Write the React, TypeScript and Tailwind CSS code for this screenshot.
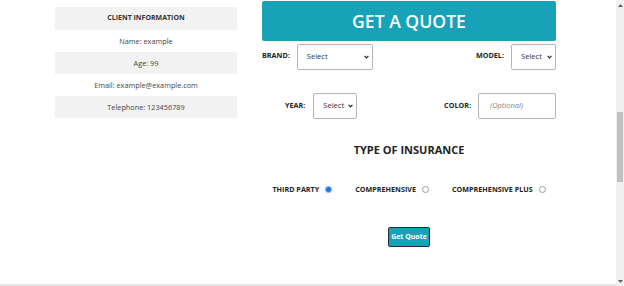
import React from "react";

function Chevron() {
  return (
    <svg width="5" height="4" viewBox="0 0 5 4" className="shrink-0">
      <path d="M0.6 0.8 L2.5 2.8 L4.4 0.8" fill="none" stroke="#222" strokeWidth="1.2" />
    </svg>
  );
}

function FakeSelect({ w, textPl }: { w: string; textPl: string }) {
  return (
    <div
      className={`flex h-[26px] ${w} items-center justify-between rounded-[2px] border border-[#b5b5b5] bg-white ${textPl} pr-[3px] text-[7.6px] text-[#333]`}
    >
      <span>Select</span>
      <Chevron />
    </div>
  );
}

function Radio({ checked }: { checked?: boolean }) {
  return checked ? (
    <span className="inline-block h-[7px] w-[7px] shrink-0 rounded-full border border-[#7fb0f5] bg-[#1f78f0]" />
  ) : (
    <span className="inline-block h-[7px] w-[7px] shrink-0 rounded-full border border-[#9a9a9a] bg-white" />
  );
}

export default function App() {
  const rows = [
    { t: "Name: example", grey: false },
    { t: "Age: 99", grey: true },
    { t: "Email: example@example.com", grey: false },
    { t: "Telephone: 123456789", grey: true },
  ];
  return (
    <div className="flex h-[286px] w-[624px] overflow-hidden bg-white font-['Open_Sans',sans-serif]">
      <div className="flex flex-1 flex-col">
        <div className="flex flex-1 pl-[55px] pt-[1px]">
          {/* Left column */}
          <div className="mt-[6px] w-[182px]">
            <div className="flex h-[23px] items-center justify-center bg-[#f2f2f2] text-[7px] font-bold text-[#333]">
              CLIENT INFORMATION
            </div>
            {rows.map((r) => (
              <div
                key={r.t}
                className={`flex h-[22px] items-center justify-center text-[7.3px] text-[#444] ${r.grey ? "bg-[#f2f2f2]" : "bg-white"}`}
              >
                {r.t}
              </div>
            ))}
          </div>

          {/* Right column */}
          <div className="ml-[25px] flex w-[294px] flex-col">
            <div className="flex h-[40px] items-center justify-center rounded-[2px] bg-[#17a2b8] text-[17.6px] font-semibold text-white">
              GET A QUOTE
            </div>

            <div className="mt-[3px] flex items-start justify-between">
              <div className="flex items-start gap-[7px]">
                <span className="mt-[6px] text-[7.2px] font-bold text-[#222]">BRAND:</span>
                <FakeSelect w="w-[76px]" textPl="pl-[9px]" />
              </div>
              <div className="flex items-start gap-[7px]">
                <span className="mt-[6px] text-[7.2px] font-bold text-[#222]">MODEL:</span>
                <FakeSelect w="w-[45px]" textPl="pl-[9px]" />
              </div>
            </div>

            <div className="mt-[23px] flex items-start justify-between pl-[23px]">
              <div className="flex items-start gap-[8px]">
                <span className="mt-[7px] text-[7.2px] font-bold text-[#222]">YEAR:</span>
                <FakeSelect w="w-[44px]" textPl="pl-[9px]" />
              </div>
              <div className="flex items-start gap-[7px]">
                <span className="mt-[7px] text-[7.2px] font-bold text-[#222]">COLOR:</span>
                <div className="flex h-[26px] w-[78px] items-center rounded-[2px] border border-[#b5b5b5] bg-white pl-[11px] text-[7.5px] italic text-[#888]">
                  (Optional)
                </div>
              </div>
            </div>

            <div className="mt-[23px] text-center text-[11px] font-bold leading-[16px] text-[#222]">
              TYPE OF INSURANCE
            </div>

            <div className="mt-[25px] flex items-center justify-center gap-[23px] whitespace-nowrap text-[7.2px] font-bold leading-[12px] text-[#222]">
              <div className="flex items-center gap-[6px]">
                <span>THIRD PARTY</span>
                <Radio checked />
              </div>
              <div className="flex items-center gap-[6px]">
                <span>COMPREHENSIVE</span>
                <Radio />
              </div>
              <div className="flex items-center gap-[6px]">
                <span>COMPREHENSIVE PLUS</span>
                <Radio />
              </div>
            </div>

            <div className="mt-[32px] flex justify-center">
              <div className="flex h-[20px] w-[42px] items-center justify-center rounded-[2px] border border-[#2b2b2b] bg-[#17a2b8] text-[7px] font-bold text-white">
                Get Quote
              </div>
            </div>
          </div>
        </div>
        <div className="h-[2px] bg-[#e6e6e6]" />
      </div>

      {/* Scrollbar */}
      <div className="flex w-[8px] flex-col items-center bg-[#f0f0f0]">
        <svg width="5" height="3" viewBox="0 0 5 3" className="mt-[4px]">
          <path d="M0 3 L2.5 0 L5 3 Z" fill="#606060" />
        </svg>
        <div className="mt-[105px] h-[70px] w-[6px] bg-[#c1c1c1]" />
        <div className="flex-1" />
        <svg width="5" height="3" viewBox="0 0 5 3" className="mb-[3px]">
          <path d="M0 0 L5 0 L2.5 3 Z" fill="#606060" />
        </svg>
      </div>
    </div>
  );
}
